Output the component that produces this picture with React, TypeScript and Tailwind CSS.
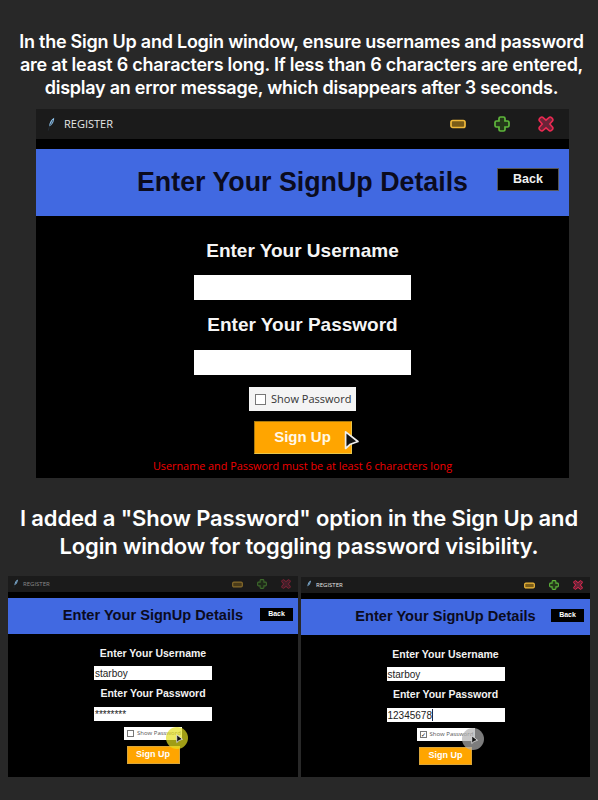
import React from "react";

const sans = "font-['Liberation_Sans',Arial,sans-serif]";
const ui = "font-['Open_Sans',sans-serif]";

const Feather = ({ className }: { className: string }) => (
  <svg viewBox="0 0 12 20" className={className}>
    <path d="M9.5 1C5.5 3 3 7.5 2.8 12.5L5.5 11C8 8.5 9.8 5 9.5 1Z" fill="#8fc4ee" />
    <path d="M8 4L2.5 14.5L1.8 18" stroke="#26323c" strokeWidth="1" fill="none" />
  </svg>
);

const Minimize = ({ className }: { className: string }) => (
  <svg viewBox="0 0 16 10" className={className}>
    <rect x="1" y="1.5" width="14" height="7" rx="1.8" fill="#7a5c18" stroke="#f0b93a" strokeWidth="1.7" />
  </svg>
);

const Plus = ({ className }: { className: string }) => (
  <svg viewBox="0 0 16 16" className={className}>
    <path
      d="M5 2.5Q5 1 6.5 1H9.5Q11 1 11 2.5V5H13.5Q15 5 15 6.5V9.5Q15 11 13.5 11H11V13.5Q11 15 9.5 15H6.5Q5 15 5 13.5V11H2.5Q1 11 1 9.5V6.5Q1 5 2.5 5H5Z"
      fill="#24381a"
      stroke="#5fb83c"
      strokeWidth="1.7"
    />
  </svg>
);

const Close = ({ className }: { className: string }) => (
  <svg viewBox="0 0 16 16" className={className}>
    <path
      d="M4.5 1.2L8 4.2L11.5 1.2Q12.5 0.8 13.5 1.6L14.4 2.5Q15.2 3.5 14.8 4.5L11.8 8L14.8 11.5Q15.2 12.5 14.4 13.5L13.5 14.4Q12.5 15.2 11.5 14.8L8 11.8L4.5 14.8Q3.5 15.2 2.5 14.4L1.6 13.5Q0.8 12.5 1.2 11.5L4.2 8L1.2 4.5Q0.8 3.5 1.6 2.5L2.5 1.6Q3.5 0.8 4.5 1.2Z"
      fill="#6a2438"
      stroke="#ea2a52"
      strokeWidth="1.6"
    />
  </svg>
);

const Cursor = ({ className }: { className: string }) => (
  <svg viewBox="0 0 14 20" className={className}>
    <path d="M1.5 1.5V17L6 13L13 10.5Z" fill="#111" stroke="#eee" strokeWidth="1.6" strokeLinejoin="round" />
  </svg>
);

const SmallWindow = ({
  password,
  checked,
  dim,
  ring,
  className,
}: {
  password: string;
  checked?: boolean;
  dim?: boolean;
  ring: string;
  className: string;
}) => (
  <div className={`flex flex-col bg-black ${className}`}>
    <div className="flex h-[16px] shrink-0 items-center bg-[#1b1b1b] pr-[7px] pl-[5px]">
      <Feather className="h-[10px] w-[6px]" />
      <span className={`ml-[4px] text-[6px] ${ui} ${dim ? "text-[#8a8a8a]" : "text-[#e6e6e6]"}`}>REGISTER</span>
      <div className={`ml-auto flex items-center gap-[14px] ${dim ? "opacity-50" : ""}`}>
        <Minimize className="h-[7px] w-[11px]" />
        <Plus className="h-[10px] w-[10px]" />
        <Close className="h-[10px] w-[10px]" />
      </div>
    </div>
    <div className="mt-[6px] grid h-[36px] shrink-0 grid-cols-[1fr_auto_1fr] items-center bg-[#4169e1]">
      <div />
      <h2 className={`text-[14.6px] font-bold text-[#0b0b1e] ${sans}`}>Enter Your SignUp Details</h2>
      <button className={`mb-[3px] h-[13px] w-[33px] justify-self-end bg-black text-[7px] font-bold text-white ${checked ? "mr-[6px]" : "mr-[5px]"} ${sans}`}>
        Back
      </button>
    </div>
    <div className={`flex flex-col items-center text-white ${sans}`}>
      <p className="mt-[13px] text-[10.5px] leading-[12px] font-bold text-[#f2f2f2]">Enter Your Username</p>
      <div className="mt-[7px] flex h-[14px] w-[118px] items-center bg-white pl-[1px] text-[10px] text-[#222]">starboy</div>
      <p className="mt-[7px] text-[10.5px] leading-[12px] font-bold text-[#f2f2f2]">Enter Your Password</p>
      <div className="mt-[8px] flex h-[14px] w-[118px] items-center bg-white pl-[1px] text-[10px] text-[#222]">
        {password}
        {checked && <span className="h-[12px] w-px bg-[#1a2a50]" />}
      </div>
      <div className="relative mt-[6px] flex flex-col items-center">
        <div className="flex h-[13px] w-[58px] items-center bg-white pl-[3px]">
          <span className="flex h-[7px] w-[7px] shrink-0 items-center justify-center border border-[#777] text-[6px] leading-none text-black">
            {checked ? "✓" : ""}
          </span>
          <span className={`ml-[3px] text-[6px] whitespace-nowrap text-[#555] ${ui}`}>Show Password</span>
        </div>
        <button className="mt-[6px] h-[18px] w-[53px] border border-[#d9a53a] bg-[#ffa500] text-[9px] font-bold text-white">
          Sign Up
        </button>
        <span className={`absolute top-0 h-[22px] w-[22px] rounded-full ${ring}`} />
        <Cursor className={`absolute top-[7px] h-[10px] w-[7px] ${checked ? "left-[54px]" : "left-[52px]"}`} />
      </div>
    </div>
  </div>
);

export default function App() {
  return (
    <div className="flex h-[800px] w-[598px] flex-col overflow-hidden bg-[#282828]">
      <h1 className="pt-[30px] pl-[5px] text-center text-[18px] leading-[23px] font-semibold tracking-[-0.25px] whitespace-nowrap text-white font-['Inter',sans-serif]">
        In the Sign Up and Login window, ensure usernames and password
        <br />
        are at least 6 characters long. If less than 6 characters are entered,
        <br />
        display an error message, which disappears after 3 seconds.
      </h1>

      <div className="mt-[10px] ml-[36px] flex h-[369px] w-[533px] shrink-0 flex-col bg-black">
        <div className="flex h-[30px] items-center bg-[#1b1b1b] pr-[15px] pl-[11px]">
          <Feather className="h-[17px] w-[9px]" />
          <span className={`ml-[8px] text-[11px] text-[#e6e6e6] ${ui}`}>REGISTER</span>
          <div className="ml-auto flex items-center gap-[28px]">
            <Minimize className="h-[10px] w-[16px]" />
            <Plus className="h-[16px] w-[16px]" />
            <Close className="h-[16px] w-[16px]" />
          </div>
        </div>
        <div className="mt-[10px] grid h-[67px] grid-cols-[1fr_auto_1fr] items-center bg-[#4169e1]">
          <div />
          <h2 className={`text-[26.8px] font-bold text-[#0b0b1e] ${sans}`}>Enter Your SignUp Details</h2>
          <button className={`mr-[10px] mb-[6px] h-[23px] w-[62px] justify-self-end border border-[#555] bg-black text-[12.5px] font-bold text-[#f0f0f0] ${sans}`}>
            Back
          </button>
        </div>
        <div className={`flex flex-col items-center ${sans}`}>
          <p className="mt-[24px] text-[19px] leading-[22px] font-bold text-[#f5f5f5]">Enter Your Username</p>
          <div className="mt-[13px] h-[25px] w-[217px] bg-white" />
          <p className="mt-[14px] text-[19px] leading-[22px] font-bold text-[#f5f5f5]">Enter Your Password</p>
          <div className="mt-[14px] h-[25px] w-[217px] bg-white" />
          <div className="mt-[12px] flex h-[24px] w-[107px] items-center bg-[#f4f4f4] pl-[6px]">
            <span className="h-[11px] w-[11px] shrink-0 border border-[#777] bg-white" />
            <span className={`ml-[5px] text-[11px] whitespace-nowrap text-[#333] ${ui}`}>Show Password</span>
          </div>
          <div className="relative mt-[10px]">
            <button className="h-[33px] w-[98px] border border-[#e8c54a] border-t-[#a87a10] border-l-[#a87a10] bg-[#ffa500] text-[15px] font-bold text-[#fff8e8]">
              Sign Up
            </button>
            <Cursor className="absolute top-[8px] left-[90px] h-[24px] w-[15px]" />
          </div>
          <p className={`mt-[4px] text-[10.85px] text-[#f00000] ${ui}`}>Username and Password must be at least 6 characters long</p>
        </div>
      </div>

      <h1 className="pt-[26px] text-center text-[22px] leading-[28px] font-semibold tracking-[-0.15px] whitespace-nowrap text-white font-['Inter',sans-serif]">
        I added a "Show Password" option in the Sign Up and
        <br />
        Login window for toggling password visibility.
      </h1>

      <div className="mt-[16px] flex items-start pl-[8px]">
        <SmallWindow password="********" dim ring="left-[42px] bg-[#e4e020]/70" className="h-[201px] w-[290px]" />
        <SmallWindow password="12345678" checked ring="left-[45px] bg-[#b0b0b0]/70" className="mt-[1px] ml-[3px] h-[200px] w-[289px]" />
      </div>
    </div>
  );
}
